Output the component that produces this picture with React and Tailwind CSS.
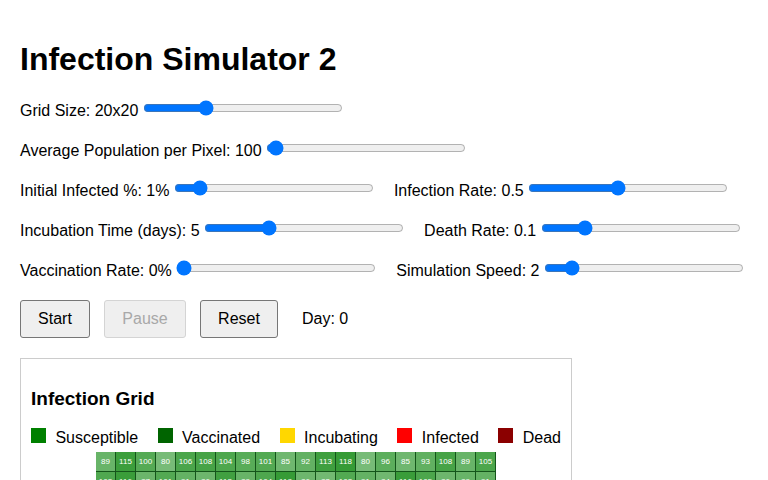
const row1 = [89, 115, 100, 80, 106, 108, 104, 98, 101, 85, 92, 113, 118, 80, 96, 85, 93, 108, 89, 105];
const row2 = [103, 116, 87, 101, 91, 86, 112, 89, 104, 118, 86, 83, 102, 91, 84, 116, 105, 86, 89, 91];

const Control = ({ label, value, min, max, step }) => (
  <label className="mr-5 inline-block">
    {label}{" "}
    <input
      type="range"
      min={min}
      max={max}
      step={step}
      defaultValue={value}
      className="w-[200px] accent-[#0075ff]"
    />
  </label>
);

const Legend = ({ color, label }) => (
  <span className="flex items-center">
    <span className={`mr-[9.45px] inline-block h-[15px] w-[15px] -translate-y-[3px] ${color}`} />
    {label}
  </span>
);

const Cell = ({ value }) => (
  <div
    className="flex h-5 w-5 items-center justify-center border-r border-b border-[#14551a] text-[8px] text-white"
    style={{ backgroundColor: `rgba(0, 128, 0, ${value / 150})` }}
  >
    {value}
  </div>
);

const App = () => {
  return (
    <div className="h-[480px] overflow-hidden bg-white px-5 pt-10 font-['Liberation_Sans',sans-serif] text-base text-black">
      <h1 className="mt-[1px] text-[32px] leading-[37px] font-bold">Infection Simulator 2</h1>

      <div className="mt-[21px] h-10 whitespace-nowrap">
        <Control label="Grid Size: 20x20" value={20} min={5} max={55} />
      </div>
      <div className="h-10 whitespace-nowrap">
        <Control label="Average Population per Pixel: 100" value={100} min={85} max={2000} />
      </div>
      <div className="h-10 whitespace-nowrap">
        <Control label="Initial Infected %: 1%" value={1} min={0} max={10} />
        <Control label="Infection Rate: 0.5" value={0.5} min={0.1} max={1} step={0.1} />
      </div>
      <div className="h-10 whitespace-nowrap">
        <Control label="Incubation Time (days): 5" value={5} min={1} max={14} />
        <Control label="Death Rate: 0.1" value={0.1} min={0} max={0.5} step={0.1} />
      </div>
      <div className="mb-[1px] h-10 whitespace-nowrap">
        <Control label="Vaccination Rate: 0%" value={0} min={0} max={100} />
        <Control label="Simulation Speed: 2" value={2} min={1} max={10} />
      </div>

      <div className="flex items-center">
        <button className="h-[38px] w-[70px] rounded-[3px] border border-[#767676] bg-[#efefef]">Start</button>
        <button disabled className="ml-[14px] h-[38px] w-[82px] rounded-[3px] border border-[#d4d4d4] bg-[#efefef] text-[#a8a8a8]">Pause</button>
        <button className="ml-[14px] h-[38px] w-[78px] rounded-[3px] border border-[#767676] bg-[#efefef]">Reset</button>
        <span className="ml-6">Day: 0</span>
      </div>

      <div className="mt-5 w-[552px] border border-[#cccccc] px-[10px] pt-[29px]">
        <h3 className="text-[19px] leading-[22px] font-bold">Infection Grid</h3>
        <div className="mt-[19px] flex justify-between leading-[18px]">
          <Legend color="bg-[#008000]" label="Susceptible" />
          <Legend color="bg-[#006400]" label="Vaccinated" />
          <Legend color="bg-[#ffd700]" label="Incubating" />
          <Legend color="bg-[#ff0000]" label="Infected" />
          <Legend color="bg-[#8b0000]" label="Dead" />
        </div>
        <div className="mx-auto mt-[5px] w-[400px]">
          <div className="flex">{row1.map((v, i) => <Cell key={i} value={v} />)}</div>
          <div className="flex">{row2.map((v, i) => <Cell key={i} value={v} />)}</div>
        </div>
      </div>
    </div>
  );
};

export default App;
